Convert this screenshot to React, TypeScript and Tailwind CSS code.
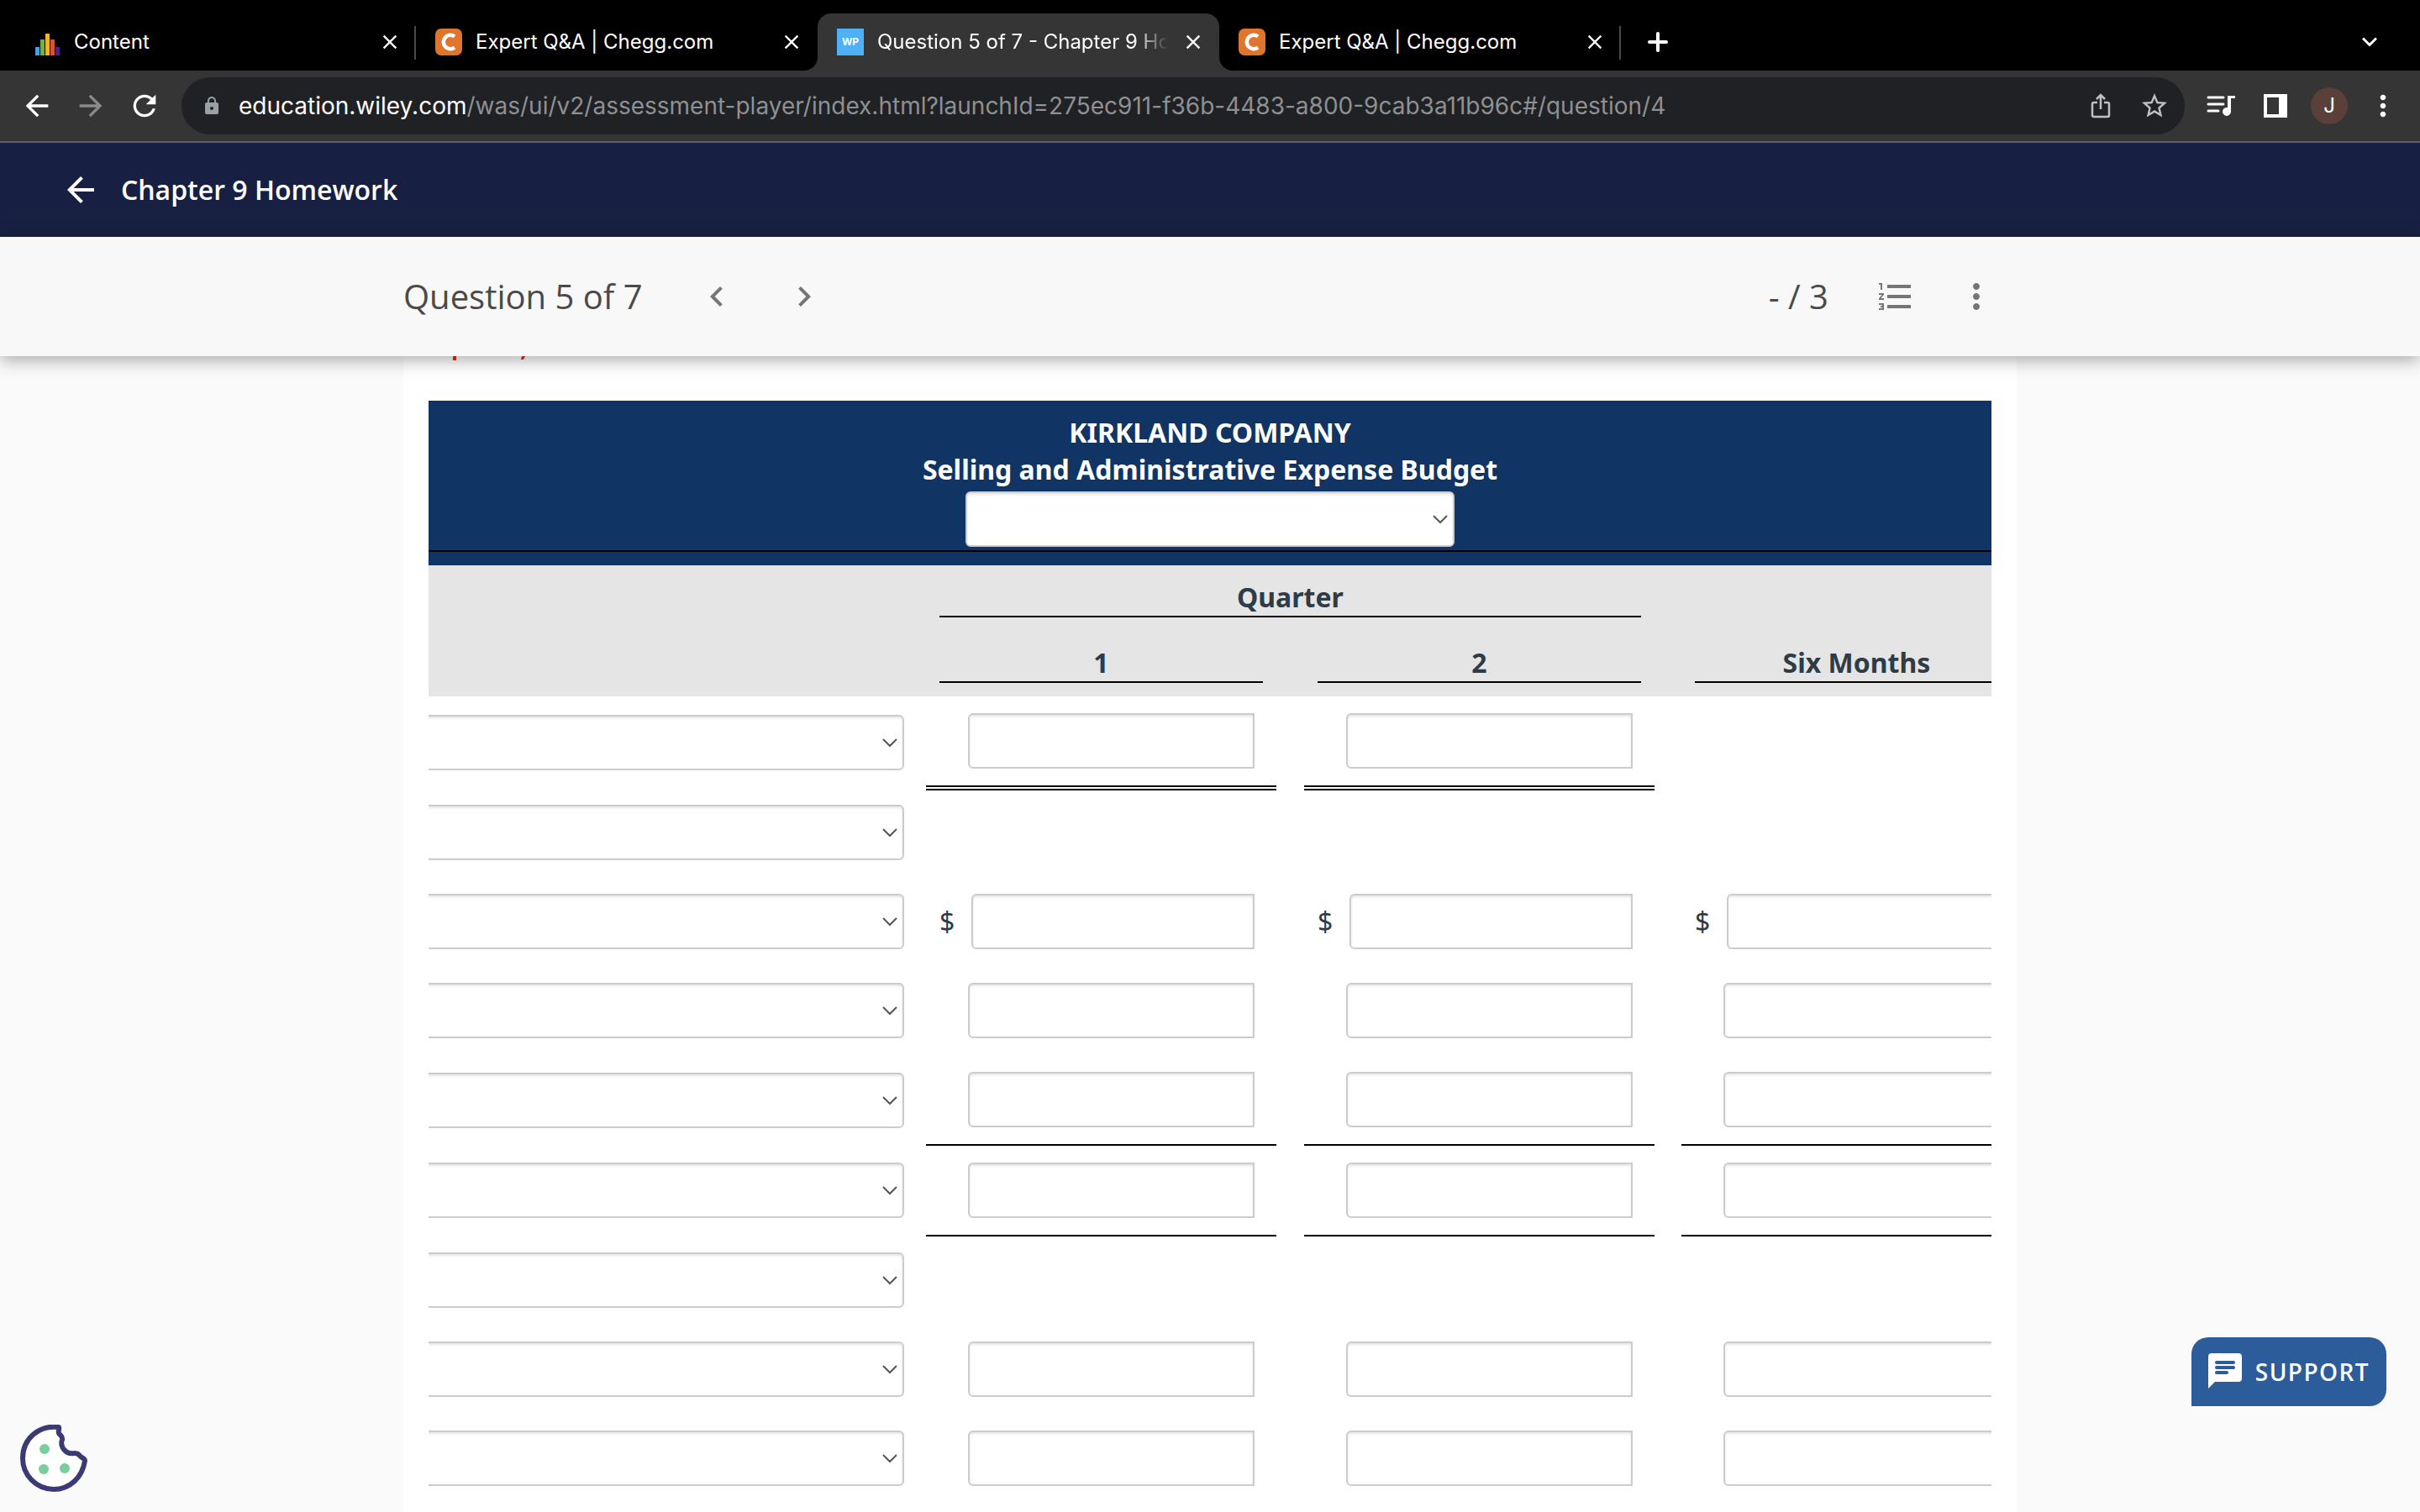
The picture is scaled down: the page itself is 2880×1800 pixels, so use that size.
import type { ReactNode } from "react";
import { MdArrowBack, MdArrowForward, MdRefresh, MdLock, MdStarBorder, MdMoreVert, MdFormatListNumbered, MdChevronLeft, MdChevronRight, MdClose } from "react-icons/md";

type Row = { dollar?: boolean; fields: boolean[]; line?: "single" | "double" };

const rows: Row[] = [
  { fields: [true, true, false], line: "double" },
  { fields: [false, false, false] },
  { fields: [true, true, true], dollar: true },
  { fields: [true, true, true] },
  { fields: [true, true, true], line: "single" },
  { fields: [true, true, true], line: "single" },
  { fields: [false, false, false] },
  { fields: [true, true, true] },
  { fields: [true, true, true] },
];

const columns = ["Quarter 1", "Quarter 2", "Six Months"];

function Dropdown({ label }: { label: string }) {
  return (
    <div className="relative">
      <select aria-label={label} className="block w-full h-[66px] appearance-none rounded-md border-2 border-[#cccccc] bg-white pl-3 pr-10 text-[28px] shadow-[inset_0_2px_3px_rgba(0,0,0,0.1)]">
        <option value=""></option>
      </select>
      <svg className="pointer-events-none absolute right-2 top-[25px] w-[18px] h-4" viewBox="0 0 18 16" fill="none" stroke="#555" strokeWidth="2">
        <path d="M1 4l8 8 8-8" />
      </svg>
    </div>
  );
}

function Field({ label, dollar }: { label: string; dollar?: boolean }) {
  return (
    <div className="flex items-center">
      {dollar && <span className="w-[38px] text-[32px] leading-[44px]">$</span>}
      <input
        type="text"
        aria-label={label}
        className={`block min-w-0 flex-1 h-[66px] rounded-l-md border-2 border-[#cccccc] bg-white px-3 text-[28px] shadow-[inset_0_2px_3px_rgba(0,0,0,0.1)] ${dollar ? "" : "ml-[34px]"}`}
      />
    </div>
  );
}

function CheggIcon() {
  return (
    <svg className="w-8 h-8 shrink-0" viewBox="0 0 32 32">
      <rect width="32" height="32" rx="7" fill="#e0762d" />
      <path d="M23 9.500a8.200 8.200 0 1 0 0 13" fill="none" stroke="#fff" strokeWidth="4.500" />
    </svg>
  );
}

function ContentIcon() {
  return (
    <svg className="w-8 h-8 shrink-0" viewBox="0 0 32 32">
      <rect x="2" y="22" width="5" height="10" fill="#4a9fe0" />
      <rect x="8" y="13" width="5" height="19" fill="#6fae48" />
      <rect x="14" y="6" width="5" height="26" fill="#f2b430" />
      <rect x="20" y="13" width="5" height="19" fill="#d9532c" />
      <rect x="26" y="22" width="5" height="10" fill="#4b2380" />
    </svg>
  );
}

function WileyIcon() {
  return <span className="flex w-8 h-8 shrink-0 items-center justify-center bg-[#4fb1f5] text-xs font-bold text-white">WP</span>;
}

function Tab({ icon, title, active, divider }: { icon: ReactNode; title: string; active?: boolean; divider?: boolean }) {
  return (
    <div className={`relative flex h-[68px] w-[478px] items-center pl-[23px] pr-[17px] ${active ? "rounded-t-2xl bg-[#353535]" : ""}`}>
      {active && (
        <>
          <svg className="absolute -left-4 bottom-0 w-4 h-4" viewBox="0 0 16 16"><path d="M16 0v16H0A16 16 0 0 0 16 0z" fill="#353535" /></svg>
          <svg className="absolute -right-4 bottom-0 w-4 h-4" viewBox="0 0 16 16"><path d="M0 0v16h16A16 16 0 0 1 0 0z" fill="#353535" /></svg>
        </>
      )}
      {icon}
      <span className={`ml-4 flex-1 overflow-hidden whitespace-nowrap text-2xl text-white ${active ? "[mask-image:linear-gradient(to_right,#000_88%,transparent)]" : ""}`}>{title}</span>
      <button type="button" aria-label={`Close ${title}`} className="ml-4 text-white">
        <MdClose className="w-7 h-7" />
      </button>
      {divider && <span className="absolute right-0 top-[15px] h-10 w-[2px] bg-[#4a4a4a]" />}
    </div>
  );
}

function BrowserChrome() {
  return (
    <div className="font-[Inter,sans-serif]">
      <div className="flex h-[84px] items-end bg-black pl-[17px]">
        <Tab icon={<ContentIcon />} title="Content" divider />
        <Tab icon={<CheggIcon />} title="Expert Q&A | Chegg.com" />
        <Tab icon={<WileyIcon />} title="Question 5 of 7 - Chapter 9 Homework" active />
        <Tab icon={<CheggIcon />} title="Expert Q&A | Chegg.com" divider />
        <button type="button" aria-label="New tab" className="flex h-[68px] items-center pl-[30px] text-white">
          <svg className="w-7 h-7" viewBox="0 0 28 28" stroke="currentColor" strokeWidth="4" strokeLinecap="round"><path d="M14 4v20M4 14h20" /></svg>
        </button>
        <button type="button" aria-label="Search tabs" className="ml-auto mr-[51px] flex h-[68px] items-center text-white">
          <svg className="w-[18px] h-3" viewBox="0 0 18 12" fill="none" stroke="currentColor" strokeWidth="3"><path d="M1 1.500l8 8 8-8" /></svg>
        </button>
      </div>
      <div className="flex h-[86px] items-center border-b-2 border-[#5f5f5f] bg-[#353535] px-6 text-white">
        <button type="button" aria-label="Back"><MdArrowBack className="w-10 h-10" /></button>
        <button type="button" aria-label="Forward" className="ml-6 text-[#8a8a8a]"><MdArrowForward className="w-10 h-10" /></button>
        <button type="button" aria-label="Reload" className="ml-6"><MdRefresh className="w-10 h-10" /></button>
        <div className="ml-6 flex h-[68px] flex-1 items-center rounded-full bg-[#202124] pl-6 pr-[18px]">
          <MdLock className="w-6 h-6 text-[#9aa0a6]" />
          <div className="ml-5 flex-1 whitespace-nowrap text-[28px] text-[#8e9093]">
            <span className="text-white">education.wiley.com</span>/was/ui/v2/assessment-player/index.html?launchId=275ec911-f36b-4483-a800-9cab3a11b96c#/question/4
          </div>
          <button type="button" aria-label="Share" className="text-[#c0c0c0]">
            <svg className="w-8 h-8" viewBox="0 0 32 32" fill="none" stroke="currentColor" strokeWidth="2.500"><path d="M12 12H8a2 2 0 0 0-2 2v13a2 2 0 0 0 2 2h16a2 2 0 0 0 2-2V14a2 2 0 0 0-2-2h-4M16 20V3M11 8l5-5 5 5" /></svg>
          </button>
          <button type="button" aria-label="Bookmark" className="ml-[30px] text-[#c0c0c0]"><MdStarBorder className="w-9 h-9" /></button>
        </div>
        <button type="button" aria-label="Media" className="ml-6">
          <svg className="w-9 h-9" viewBox="0 0 36 36" fill="currentColor">
            <path d="M4 8h18M4 16h18M4 24h12" stroke="currentColor" strokeWidth="3" strokeLinecap="round" />
            <path d="M27 6h9v3h-5v16a5 5 0 1 1-4-5z" />
          </svg>
        </button>
        <button type="button" aria-label="Side panel" className="ml-[34px]">
          <svg className="w-7 h-7" viewBox="0 0 28 28" fill="currentColor"><path fillRule="evenodd" d="M0 0h28v28H0zM4 4v20h14V4z" /></svg>
        </button>
        <button type="button" aria-label="Profile" className="ml-7 flex w-11 h-11 items-center justify-center rounded-full bg-[#5a4038] text-2xl">J</button>
        <button type="button" aria-label="Browser menu" className="ml-[22px]"><MdMoreVert className="w-10 h-10" /></button>
      </div>
    </div>
  );
}

function Cookie() {
  return (
    <button type="button" aria-label="Cookie settings" className="absolute bottom-6 left-6">
      <svg className="w-20 h-20" viewBox="0 0 80 80">
        <path d="M46 3C22 0 3 17 3 40a37 37 0 0 0 37 37c19 0 34-14 37-34 0-3-4-3-7-7-4-4-8 0-14-3-6-4-8-10-6-15 1-5-3-5-4-8s1-5-0-7z" fill="#fff" stroke="#3c3a75" strokeWidth="6" strokeLinejoin="round" />
        <circle cx="29" cy="29" r="6" fill="#78cf9b" />
        <circle cx="28" cy="53" r="6" fill="#78cf9b" />
        <circle cx="53" cy="52" r="6" fill="#78cf9b" />
      </svg>
    </button>
  );
}

function BudgetTable() {
  return (
    <div className="overflow-hidden font-['Noto_Sans',sans-serif]">
      <table className="-mx-12 w-[calc(100%+96px)] table-fixed border-collapse text-[32px] leading-[44px] text-[#2f3b45]">
        <colgroup>
          <col />
          <col className="w-[417px]" />
          <col className="w-[33px]" />
          <col className="w-[417px]" />
          <col className="w-8" />
          <col className="w-[417px]" />
        </colgroup>
        <thead>
          <tr>
            <th colSpan={6} className="bg-[#103463] p-0 pb-4 font-bold text-white">
              <div className="flex flex-col items-center border-b-2 border-black pt-4 pb-1">
                <span>KIRKLAND COMPANY</span>
                <span>Selling and Administrative Expense Budget</span>
                <div className="mt-1 w-[582px]"><Dropdown label="Budget period" /></div>
              </div>
            </th>
          </tr>
          <tr className="bg-[#e5e5e5]">
            <td className="p-0" />
            <th colSpan={3} className="p-4"><div className="border-b-2 border-black">Quarter</div></th>
            <td colSpan={2} className="p-0" />
          </tr>
          <tr className="bg-[#e5e5e5]">
            <td className="p-0" />
            <th className="p-4"><div className="border-b-2 border-black">1</div></th>
            <td className="p-0" />
            <th className="p-4"><div className="border-b-2 border-black">2</div></th>
            <td className="p-0" />
            <th className="p-4"><div className="border-b-2 border-black">Six Months</div></th>
          </tr>
        </thead>
        <tbody>
          {rows.map((row, r) => (
            <tr key={r}>
              <td className="py-5 pl-4 pr-[26px]"><Dropdown label={`Line item ${r + 1}`} /></td>
              {row.fields.map((shown, c) => {
                const border = !shown || !row.line ? "" : row.line === "double" ? "border-b-6 border-double border-black" : "border-b-2 border-black";
                return [
                  c > 0 && <td key={`gap-${c}`} className="p-0" />,
                  <td key={c} className={`py-5 pl-4 pr-[26px] ${border}`}>
                    {shown && <Field label={`${columns[c]}, line ${r + 1}`} dollar={row.dollar} />}
                  </td>,
                ];
              })}
            </tr>
          ))}
        </tbody>
      </table>
    </div>
  );
}

export default function App() {
  return (
    <div className="relative flex h-screen flex-col overflow-hidden bg-[#fafafa] font-['Open_Sans',sans-serif]">
      <BrowserChrome />
      <header className="flex h-28 shrink-0 items-center bg-[#172042] pl-[72px] text-white">
        <button type="button" aria-label="Back to course"><MdArrowBack className="w-12 h-12" /></button>
        <h1 className="ml-6 text-[32px] font-semibold">Chapter 9 Homework</h1>
      </header>
      <div className="relative z-10 h-[142px] shrink-0 bg-[#f8f8f8] shadow-[0_4px_20px_rgba(0,0,0,0.35)]">
        <div className="mx-auto flex h-full max-w-[1920px] items-center text-[40px] text-[#4a4a4a]">
          <h2>Question 5 of 7</h2>
          <button type="button" aria-label="Previous question" className="ml-16 text-[#757575]"><MdChevronLeft className="w-12 h-12" /></button>
          <button type="button" aria-label="Next question" className="ml-14 text-[#757575]"><MdChevronRight className="w-12 h-12" /></button>
          <span className="ml-auto">- / 3</span>
          <button type="button" aria-label="Question list" className="ml-14 text-[#757575]"><MdFormatListNumbered className="w-12 h-12" /></button>
          <button type="button" aria-label="More options" className="ml-12 mr-6 text-[#757575]"><MdMoreVert className="w-12 h-12" /></button>
        </div>
      </div>
      <main className="mx-auto w-full max-w-[1920px] flex-1 bg-white px-[30px]">
        <div className="h-[53px]">
          <svg className="ml-[28px] h-2 w-[90px]" viewBox="0 0 90 8" fill="#d9301f"><path d="M1 0h4v5H1zM83 0h4l-2 4h-3z" /></svg>
        </div>
        <BudgetTable />
      </main>
      <Cookie />
      <button type="button" className="absolute bottom-[126px] right-10 flex h-[82px] items-center rounded-[20px] rounded-bl-none bg-[#2c5c9a] px-5 text-[28px] font-semibold tracking-wider text-white">
        <svg className="mr-4 h-11 w-10" viewBox="0 0 40 44">
          <path d="M4 0h32a4 4 0 0 1 4 4v26a4 4 0 0 1-4 4H8l-8 8V4a4 4 0 0 1 4-4z" fill="#fff" />
          <path d="M10 11h20M10 17h20M10 23h12" stroke="#2c5c9a" strokeWidth="4" strokeLinecap="round" />
        </svg>
        SUPPORT
      </button>
    </div>
  );
}
